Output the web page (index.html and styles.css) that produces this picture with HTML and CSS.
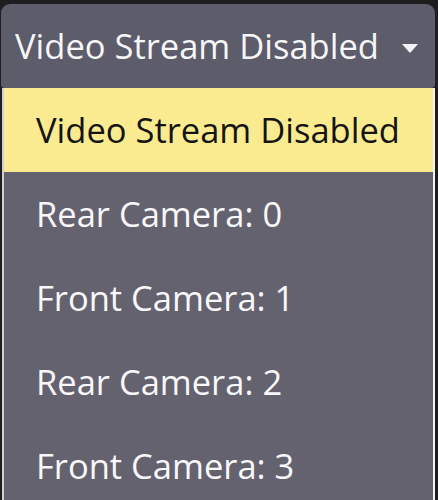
FILE: index.html
```html
<!DOCTYPE html>
<html lang="en">
<head>
  <meta charset="UTF-8" />
  <meta name="viewport" content="width=device-width, initial-scale=1" />
  <title>Video Source</title>
  <link rel="stylesheet" href="styles.css">
</head>
<body>

  <div class="picker">
    <div class="select">
      <span class="select-label">Video Stream Disabled</span>
      <svg class="caret" width="18" height="10" viewBox="0 0 18 10" aria-hidden="true">
        <path d="M1 1 H17 L10 9 Q9 10 8 9 Z" fill="#f4f4f6" />
      </svg>
    </div>

    <ul class="options">
      <li class="option selected">Video Stream Disabled</li>
      <li class="option">Rear Camera: 0</li>
      <li class="option">Front Camera: 1</li>
      <li class="option">Rear Camera: 2</li>
      <li class="option">Front Camera: 3</li>
    </ul>
  </div>

</body>
</html>
```

FILE: styles.css
```css
* {
  box-sizing: border-box;
}
html, body {
  margin: 0;
  height: 100%;
  overflow: hidden;
}
body {
  font-family: "Open Sans", "Noto Sans", sans-serif;
  background: #1e1e20;
}
.picker {
  padding: 4px 3px 0 1px;
}
.select {
  display: flex;
  align-items: center;
  justify-content: space-between;
  height: 84px;
  padding: 0 16px 0 14px;
  background: #5d5c6a;
  border-radius: 9px 9px 4px 4px;
  color: #f6f6f8;
  font-size: 34.5px;
}
.select-label {
  margin-top: -2px;
}
.caret {
  margin-top: 4px;
}
.options {
  list-style: none;
  margin: 0 0 0 1px;
  padding: 0;
  background: #64626f;
  border-left: 2px solid #cfcfd4;
  border-right: 2px solid #f2f2f2;
}
.option {
  display: flex;
  align-items: center;
  height: 84px;
  padding: 0 0 2px 32px;
  color: #f8f8fa;
  font-size: 34.5px;
}
.option.selected {
  background: #fbeb90;
  color: #141414;
}
```
